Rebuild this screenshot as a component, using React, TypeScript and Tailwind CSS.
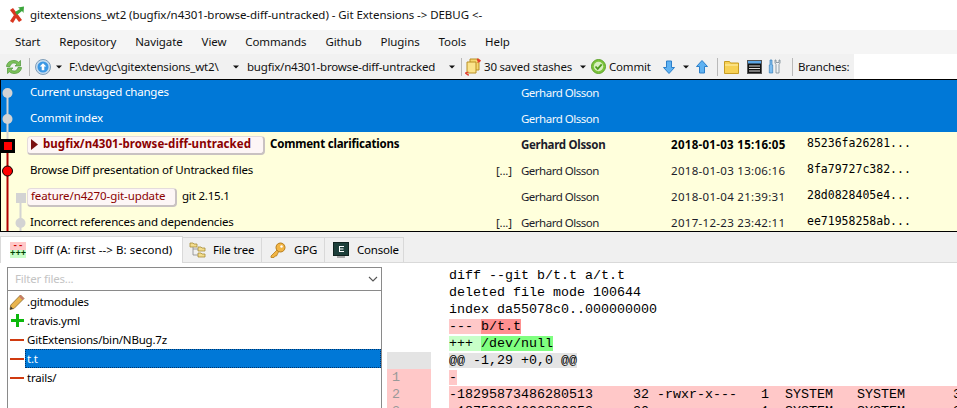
import React from "react";

const Caret = () => (
  <svg width="6" height="4" viewBox="0 0 6 4" className="shrink-0"><path d="M0 .5h6L3 3.500z" fill="#111" /></svg>
);
const Sep = () => <div className="w-px h-[18px] bg-[#b9b9b9] shrink-0" />;
const Sp = ({ c }: { c: string }) => <div className={`shrink-0 ${c}`} />;

const Refresh = () => (
  <svg width="18" height="16" viewBox="0 0 18 16" className="shrink-0">
    <path d="M1.500 7.500C2 3 5.500 1.500 9 1.500c2 0 3.500.7 4.500 1.700L15.500 1.500V7H10l2-1.700C11 4.500 10 4 8.800 4 6.800 4 5.500 5.500 5 7.500z" fill="#7cc05a" stroke="#4a9636" strokeWidth=".7" />
    <path d="M16.500 8.500C16 13 12.500 14.500 9 14.500c-2 0-3.500-.7-4.500-1.700L2.500 14.500V9H8l-2 1.700C7 11.500 8 12 9.200 12c2 0 3.300-1.500 3.800-3.500z" fill="#7cc05a" stroke="#4a9636" strokeWidth=".7" />
  </svg>
);
const CircleUp = () => (
  <svg width="16" height="16" viewBox="0 0 16 16" className="shrink-0">
    <circle cx="8" cy="8" r="7.500" fill="#c5dcf0" stroke="#7f9db8" />
    <circle cx="8" cy="8" r="5.500" fill="#3a97e4" />
    <path d="M8 4.200l3.300 3.300H9.300V11.300H6.700V7.500H4.700z" fill="#fff" />
  </svg>
);
const Stash = () => (
  <svg width="16" height="18" viewBox="0 0 16 18" className="shrink-0">
    <path d="M5 1h9v11H5z" fill="#f5d76e" stroke="#b98f25" />
    <path d="M2 4h9v11H2z" fill="#fbe38b" stroke="#b98f25" />
    <path d="M12 1l3 1.500-2.500 2M15 4a3 3 0 0 0-3-2M3 17l-2.500-2 3-1M1 14.500a3 3 0 0 0 3 2.500" fill="none" stroke="#e33b2e" strokeWidth="1.300" />
  </svg>
);
const Check = () => (
  <svg width="15" height="15" viewBox="0 0 15 15" className="shrink-0">
    <circle cx="7.500" cy="7.500" r="7" fill="#7cc43c" stroke="#5ea32a" />
    <circle cx="7.500" cy="7.500" r="4.700" fill="#d8efc0" />
    <path d="M4.500 7.500l2.200 2.300 4-4.500" fill="none" stroke="#4d9a1e" strokeWidth="1.800" />
  </svg>
);
const ArrowV = ({ up }: { up?: boolean }) => (
  <svg width="12" height="14" viewBox="0 0 12 14" className="shrink-0">
    <path d={up ? "M6 .5L11.500 6.500H8.500V13H3.500V6.500H.5z" : "M6 13.500L11.500 7.500H8.500V1H3.500V7.500H.5z"} fill="#5fb2f2" stroke="#2c7fc9" />
  </svg>
);
const Folder = () => (
  <svg width="15" height="14" viewBox="0 0 15 14" className="shrink-0">
    <path d="M.5 1.500h5l1 1.500h8V13.500H.5z" fill="#f7d154" stroke="#c79c22" />
    <path d="M1 5h13" stroke="#fff1b0" />
  </svg>
);
const Term = () => (
  <svg width="15" height="14" viewBox="0 0 15 14" className="shrink-0">
    <rect x=".5" y=".5" width="14" height="13" fill="#111" stroke="#555" />
    <rect x="1" y="1" width="13" height="2.500" fill="#5aa5e6" />
    <path d="M2 6h11M2 8.500h11M2 11h11" stroke="#ddd" />
  </svg>
);
const Tools = () => (
  <svg width="15" height="15" viewBox="0 0 15 15" className="shrink-0">
    <path d="M2 1h2v5h.7v8H1.300V6H2z" fill="#7dbdf0" stroke="#3a7fb8" strokeWidth=".7" />
    <path d="M7 1v3l1 1.500V14h3V5.500L12 4V1l-1 0v2.500H8V1z" fill="#eef2f5" stroke="#7a8a96" strokeWidth=".8" />
  </svg>
);

const rows = [
  { msg: "Current unstaged changes", author: "Gerhard Olsson", sel: true },
  { msg: "Commit index", author: "Gerhard Olsson", sel: true },
  { tag: "bugfix/n4301-browse-diff-untracked", msg: "Comment clarifications", author: "Gerhard Olsson", date: "2018-01-03 15:16:05", hash: "85236fa26281...", bold: true },
  { msg: "Browse Diff presentation of Untracked files", more: true, author: "Gerhard Olsson", date: "2018-01-03 13:06:16", hash: "8fa79727c382..." },
  { tag: "feature/n4270-git-update", msg: "git 2.15.1", author: "Gerhard Olsson", date: "2018-01-04 21:39:31", hash: "28d0828405e4..." },
  { msg: "Incorrect references and dependencies", more: true, author: "Gerhard Olsson", date: "2017-12-23 23:42:11", hash: "ee71958258ab..." },
];

const Graph = () => (
  <svg className="absolute left-0 top-0" width="28" height="152" viewBox="0 0 28 152">
    <path d="M6.500 13V66" stroke="#d3d3d3" strokeWidth="2" />
    <path d="M6.500 66V152" stroke="#b00000" strokeWidth="2" />
    <path d="M19.500 118V152" stroke="#d3d3d3" strokeWidth="2" />
    <circle cx="6.500" cy="13" r="5" fill="#d3d3d3" />
    <circle cx="6.500" cy="39" r="5" fill="#d3d3d3" />
    <rect x="1.500" y="60.500" width="11" height="11" fill="#f00" stroke="#000" strokeWidth="3" />
    <circle cx="6.500" cy="91" r="5" fill="#f00" stroke="#000" />
    <rect x="15" y="113" width="10" height="10" fill="#d3d3d3" />
    <circle cx="19.500" cy="143" r="5" fill="#d3d3d3" />
  </svg>
);

const Row = ({ r }: { r: (typeof rows)[number] }) => {
  const text = r.sel ? "text-white" : "text-black";
  return (
    <div className={`h-[26px] shrink-0 flex items-center ${r.sel ? "bg-[#0078d7]" : "bg-[#ffffdc]"} ${text}`}>
      <div className="w-[491px] pl-[26px] flex items-center min-w-0 shrink-0">
        {r.tag ? (
          <div className={`h-[19px] mr-[5px] flex items-center rounded-[4px] bg-[#fdf6f6] border-r-2 border-b-2 border-[#c9c2c2] border-t border-l border-t-[#e4dcdc] border-l-[#e4dcdc] text-[#8b0000] ${r.bold ? "font-bold w-[238px] pl-[3px] tracking-[0.05px]" : "w-[150px] pl-[3px] tracking-[-0.1px]"}`}>
            {r.bold && <svg width="7" height="11" viewBox="0 0 7 11" className="mr-[5px] shrink-0"><path d="M0 0l7 5.500-7 5.500z" fill="#7a1010" /></svg>}
            <span className="whitespace-nowrap -translate-y-px">{r.tag}</span>
          </div>
        ) : <div className="w-[3px]" />}
        <span className={`whitespace-nowrap -translate-y-px ${r.bold ? "font-bold" : ""}`}>{r.msg}</span>
      </div>
      <div className="w-[29px] pl-1 shrink-0 text-[#222]">{r.more ? "[...]" : ""}</div>
      <div className={`w-[150px] shrink-0 ${r.sel ? "text-[#f4f8fc]" : "text-[#1d1d2b]"} ${r.bold ? "font-bold tracking-[-0.3px]" : "tracking-[-0.5px]"}`}>{r.author}</div>
      <div className={`w-[136px] shrink-0 whitespace-nowrap tracking-[0.3px] ${r.bold ? "font-bold" : "text-[#1d1d2b]"}`}>{r.date}</div>
      <div className="font-['DejaVu_Sans_Mono',monospace] tracking-normal text-[11.5px] whitespace-nowrap -translate-y-px">{r.hash}</div>
    </div>
  );
};

const DiffLine = ({ children, cls = "" }: { children?: React.ReactNode; cls?: string }) => (
  <div className={`h-[17px] whitespace-pre leading-[17px] ${cls}`}>{children}</div>
);

const Gutter = ({ n, cls }: { n?: string; cls: string }) => (
  <div className={`h-[17px] leading-[17px] pl-[5px] text-[#999] ${cls}`}>{n ?? ""}</div>
);

const FileRow = ({ icon, name, sel }: { icon: React.ReactNode; name: string; sel?: boolean }) => (
  <div className="h-[19px] flex items-center">
    <div className="w-[16px] flex justify-center shrink-0">{icon}</div>
    <div className={`flex-1 h-[19px] leading-[19px] pl-[2px] ${sel ? "bg-[#0078d7] text-white outline-1 -outline-offset-1 outline-dotted outline-[#00356b]" : "text-black"}`}>{name}</div>
  </div>
);
const Minus = () => <div className="w-[14px] h-[2px] bg-[#d03a10]" />;
const Plus = () => (
  <svg width="15" height="15" viewBox="0 0 15 15"><path d="M6 1h3v5h5v3H9v5H6V9H1V6h5z" fill="#0cb80c" /></svg>
);
const Pencil = () => (
  <svg width="16" height="16" viewBox="0 0 16 16">
    <path d="M11.500 1L15 4.500 5 14.500 1 15.500 1.800 11z" fill="#e9b44c" stroke="#8a6a2c" strokeWidth=".8" />
    <path d="M11.500 1L15 4.500 13.500 6 10 2.500z" fill="#c77a6a" />
    <path d="M1 15.500l.8-3 2.200 2.200z" fill="#333" />
  </svg>
);

export default function App() {
  return (
    <div className="w-[957px] h-[408px] overflow-hidden bg-white text-black text-[11.5px] leading-none font-['Noto_Sans','Open_Sans',sans-serif] flex flex-col tracking-[-0.2px]">
      {/* Title bar */}
      <div className="h-[30px] shrink-0 flex items-center pl-[9px] bg-white tracking-[-0.06px]">
        <svg width="15" height="18" viewBox="0 0 15 18" className="mr-[6px]">
          <path d="M1 4l3-2 9 12-3 2z" fill="#d9361f" />
          <path d="M1 15l4-6 2.500 2-3.500 6z" fill="#d9361f" />
          <path d="M6 6l5-3-2-1.500 6-1-.5 6.500-1.500-2-5 4z" fill="#3da63d" />
        </svg>
        <span className="whitespace-nowrap text-[#111]">gitextensions_wt2 (bugfix/n4301-browse-diff-untracked) - Git Extensions -&gt; DEBUG &lt;-</span>
      </div>
      {/* Menu */}
      <div className="h-[24px] shrink-0 bg-[#f5f5f5] flex items-center pl-[15px] gap-[19px] whitespace-nowrap text-[#111] tracking-[-0.1px]">
        {["Start", "Repository", "Navigate", "View", "Commands", "Github", "Plugins", "Tools", "Help"].map((m) => (
          <span key={m}>{m}</span>
        ))}
      </div>
      {/* Toolbar */}
      <div className="h-[25px] shrink-0 flex bg-white">
        <div className="w-[854px] bg-[#f1f1f1] flex items-center pl-[5px] whitespace-nowrap text-[#111]">
          <Refresh />
          <Sp c="w-[6px]" /><Sep />
          <Sp c="w-[5px]" /><CircleUp />
          <Sp c="w-[5px]" /><Caret />
          <Sp c="w-[7px]" /><span className="w-[164px] shrink-0">F:\dev\gc\gitextensions_wt2\</span>
          <Caret />
          <Sp c="w-[8px]" /><span className="w-[202px] shrink-0">bugfix/n4301-browse-diff-untracked</span>
          <Caret />
          <Sp c="w-[6px]" /><Sep />
          <Sp c="w-[3px]" /><Stash />
          <Sp c="w-[3px]" /><span className="w-[96px] shrink-0">30 saved stashes</span>
          <Caret />
          <Sp c="w-[5px]" /><Check />
          <Sp c="w-[3px]" /><span className="w-[54px] shrink-0">Commit</span>
          <ArrowV />
          <Sp c="w-[8px]" /><Caret />
          <Sp c="w-[7px]" /><ArrowV up />
          <Sp c="w-[9px]" /><Sep />
          <Sp c="w-[6px]" /><Folder />
          <Sp c="w-[8px]" /><Term />
          <Sp c="w-[6px]" /><Tools />
          <Sp c="w-[9px]" /><Sep />
          <Sp c="w-[5px]" /><span>Branches:</span>
        </div>
      </div>
      {/* Revision grid */}
      <div className="relative h-[153px] shrink-0 border-y border-l border-black overflow-hidden flex flex-col">
        {rows.map((r, i) => <Row key={i} r={r} />)}
        <Graph />
      </div>
      {/* Bottom tabs */}
      <div className="flex-1 min-h-0 bg-[#f0f0f0] flex flex-col">
        <div className="h-[31px] shrink-0 flex items-end border-b border-[#d9d9d9] relative">
          <div className="h-[27px] w-[183px] bg-white border border-b-0 border-[#d9d9d9] flex items-center pl-[9px] gap-[8px] translate-y-px">
            <div className="w-4 h-4 flex flex-col text-[9px] font-bold leading-[8px] text-center font-['Liberation_Mono',monospace] tracking-normal overflow-hidden">
              <div className="h-[8px] bg-[#ffc8c8] text-[#c00]">---</div>
              <div className="h-[8px] bg-[#c8ffc8] text-[#040]">+++</div>
            </div>
            <span className="whitespace-nowrap tracking-[0.08px]">Diff (A: first --&gt; B: second)</span>
          </div>
          <div className="h-[25px] w-[79px] border-t border-r border-[#d9d9d9] flex items-center pl-[6px] gap-[7px]">
            <svg width="17" height="16" viewBox="0 0 17 16">
              <path d="M1 1h3l1 1h3v3H1zM9 5h3l1 1h3v3H9zM9 11h3l1 1h3v3H9z" fill="#f3dd8c" stroke="#a58a35" strokeWidth=".8" />
              <path d="M4 5v8h5M4 7h5" fill="none" stroke="#888" strokeWidth=".8" />
            </svg>
            <span>File tree</span>
          </div>
          <div className="h-[25px] w-[63px] border-t border-r border-[#d9d9d9] flex items-center pl-[8px] gap-[8px]">
            <svg width="16" height="16" viewBox="0 0 16 16">
              <circle cx="10.500" cy="5.500" r="4.500" fill="#f2b544" stroke="#b57c1c" />
              <path d="M7 8L1 14v1.500h3L5 14h1.500L7.500 12l1-2z" fill="#f2b544" stroke="#b57c1c" strokeWidth=".8" />
              <circle cx="11.500" cy="4.500" r="1.200" fill="#fff" />
            </svg>
            <span>GPG</span>
          </div>
          <div className="h-[25px] w-[79px] border-t border-r border-[#d9d9d9] flex items-center pl-[8px] gap-[8px]">
            <svg width="16" height="16" viewBox="0 0 16 16">
              <rect x=".5" y=".5" width="15" height="13" fill="#1d3f3a" stroke="#10231f" />
              <path d="M6 4h5v1H7v1.500h3.500v1H7V9h4v1H6z" fill="#fff" />
              <path d="M4 15h8" stroke="#666" />
            </svg>
            <span>Console</span>
          </div>
        </div>
        <div className="flex-1 min-h-0 bg-white flex">
          {/* File panel */}
          <div className="w-[387px] shrink-0 pl-[7px] pt-[4px] pr-[5px] flex flex-col">
            <div className="h-[24px] shrink-0 border border-[#8a8a8a] flex items-center justify-between pl-[7px] pr-[3px] text-[#c4c4c4]">
              <span>Filter files...</span>
              <svg width="10" height="6" viewBox="0 0 10 6"><path d="M1 1l4 4 4-4" fill="none" stroke="#555" strokeWidth="1.100" /></svg>
            </div>
            <div className="flex-1 border-x border-[#8a8a8a] pt-px pl-px">
              <FileRow icon={<Pencil />} name=".gitmodules" />
              <FileRow icon={<Plus />} name=".travis.yml" />
              <FileRow icon={<Minus />} name="GitExtensions/bin/NBug.7z" />
              <FileRow icon={<Minus />} name="t.t" sel />
              <FileRow icon={<Minus />} name="trails/" />
            </div>
          </div>
          {/* Diff */}
          <div className="flex-1 min-w-0 overflow-hidden flex pt-[4px] font-['Liberation_Mono',monospace] tracking-normal text-[13.33px]">
            <div className="w-[44px] shrink-0 pt-[85px]">
              <Gutter cls="bg-[#e4e4e4]" />
              <Gutter n="1" cls="bg-[#ffc8c8]" />
              <Gutter n="2" cls="bg-[#ffc8c8]" />
              <Gutter n="3" cls="bg-[#ffc8c8]" />
            </div>
            <div className="w-[18px] shrink-0" />
            <div className="flex-1 min-w-0 text-black">
              <DiffLine>diff --git b/t.t a/t.t</DiffLine>
              <DiffLine>deleted file mode 100644</DiffLine>
              <DiffLine>index da55078c0..000000000</DiffLine>
              <DiffLine><span className="bg-[#ffc8c8]">--- </span><span className="bg-[#ff9090]">b/t.t</span></DiffLine>
              <DiffLine><span className="bg-[#c8ffc8]">+++ </span><span className="bg-[#80ff80]">/dev/null</span></DiffLine>
              <DiffLine><span className="bg-[#e4e4e4]">@@ -1,29 +0,0 @@</span></DiffLine>
              <DiffLine><span className="bg-[#ffc8c8]">-</span></DiffLine>
              <DiffLine cls="bg-[#ffc8c8]">-18295873486280513     32 -rwxr-x---   1  SYSTEM   SYSTEM      3</DiffLine>
              <DiffLine cls="bg-[#ffc8c8]">-18750334692880853     20 -rw-r-----   1  SYSTEM   SYSTEM      3</DiffLine>
            </div>
          </div>
        </div>
      </div>
    </div>
  );
}
